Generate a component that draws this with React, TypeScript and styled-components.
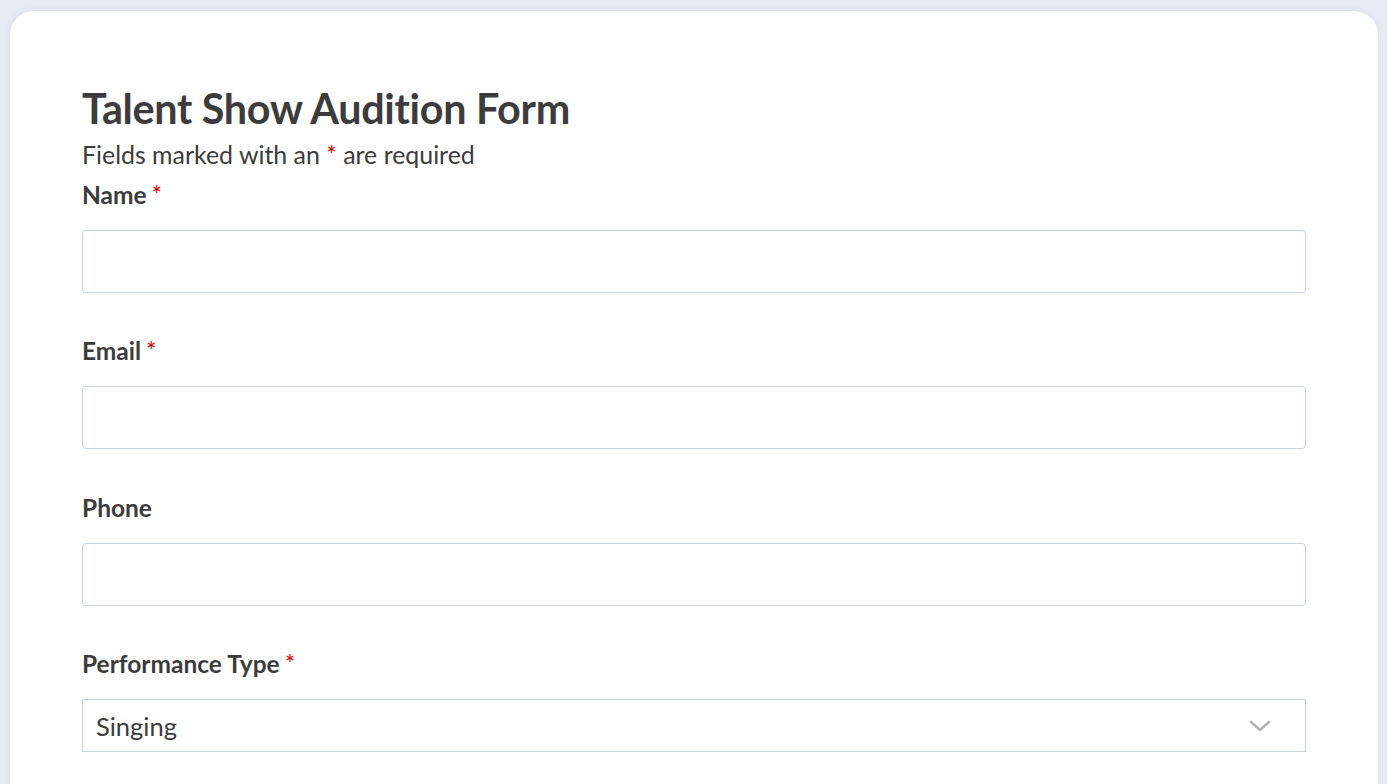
import styled, { createGlobalStyle } from "styled-components";

const GlobalStyle = createGlobalStyle`
  * { box-sizing: border-box; }
  html, body {
    margin: 0;
    height: 100%;
    overflow: hidden;
    background: #e8ebf4;
    font-family: Lato, "Noto Sans", sans-serif;
    color: #3c3c3c;
  }
`;

type Field = {
  label: string;
  required?: boolean;
  kind: "input" | "select";
  value?: string;
};

const fields: Field[] = [
  { label: "Name", required: true, kind: "input" },
  { label: "Email", required: true, kind: "input" },
  { label: "Phone", kind: "input" },
  { label: "Performance Type", required: true, kind: "select", value: "Singing" },
];

const App = () => {
  return (
    <>
      <GlobalStyle />
      <Page>
        <Card>
          <Title>Talent Show Audition Form</Title>
          <Subtitle>
            Fields marked with an <Star>*</Star> are required
          </Subtitle>
          <FieldList>
            {fields.map((f) => (
              <FieldGroup key={f.label}>
                <Label>
                  {f.label}
                  {f.required && <LabelStar>*</LabelStar>}
                </Label>
                {f.kind === "input" ? (
                  <TextInput type="text" />
                ) : (
                  <SelectBox>
                    <SelectValue>{f.value}</SelectValue>
                    <svg width="24" height="24" viewBox="0 0 24 24" fill="none">
                      <path d="M3 8l9 8 9-8" stroke="#b3b3b3" strokeWidth="2.6" strokeLinecap="round" strokeLinejoin="round" />
                    </svg>
                  </SelectBox>
                )}
              </FieldGroup>
            ))}
          </FieldList>
        </Card>
      </Page>
    </>
  );
};
export default App;

const Page = styled.div`
  padding: 11px 9px 0 10px;
  height: 100vh;
`;
const Card = styled.div`
  background: #ffffff;
  border-radius: 24px 24px 0 0;
  min-height: 100%;
  padding: 74px 72px 40px;
  box-shadow: 0 0 6px rgba(120, 130, 170, 0.15);
`;
const Title = styled.h1`
  margin: 0;
  font-size: 41.3px;
  font-weight: 700;
  line-height: 46px;
  letter-spacing: -0.3px;
  color: #3c3c3c;
`;
const Subtitle = styled.p`
  margin: 8px 0 0;
  font-size: 24.9px;
  line-height: 30px;
  color: #3c3c3c;
`;
const Star = styled.span`
  color: #e00000;
`;
const LabelStar = styled.span`
  color: #e00000;
  margin-left: 5px;
  font-weight: 400;
`;
const FieldList = styled.div`
  display: flex;
  flex-direction: column;
  gap: 44.5px;
  margin-top: 11.5px;
`;
const FieldGroup = styled.div`
  display: flex;
  flex-direction: column;
  gap: 21px;
`;
const Label = styled.label`
  font-size: 24.5px;
  font-weight: 700;
  line-height: 28px;
  color: #3c3c3c;
`;
const TextInput = styled.input`
  width: 100%;
  height: 63px;
  border: 1px solid #c9d4e0;
  border-radius: 4px;
  background: #fff;
  font: inherit;
  font-size: 24px;
  padding: 0 14px;
  outline: none;
`;
const SelectBox = styled.div`
  display: flex;
  align-items: center;
  justify-content: space-between;
  height: 53px;
  padding: 0 33px 0 13px;
  border: 1px solid #cad2d9;
  background: #fff;
`;
const SelectValue = styled.span`
  font-size: 25.5px;
  color: #3c3c3c;
`;
